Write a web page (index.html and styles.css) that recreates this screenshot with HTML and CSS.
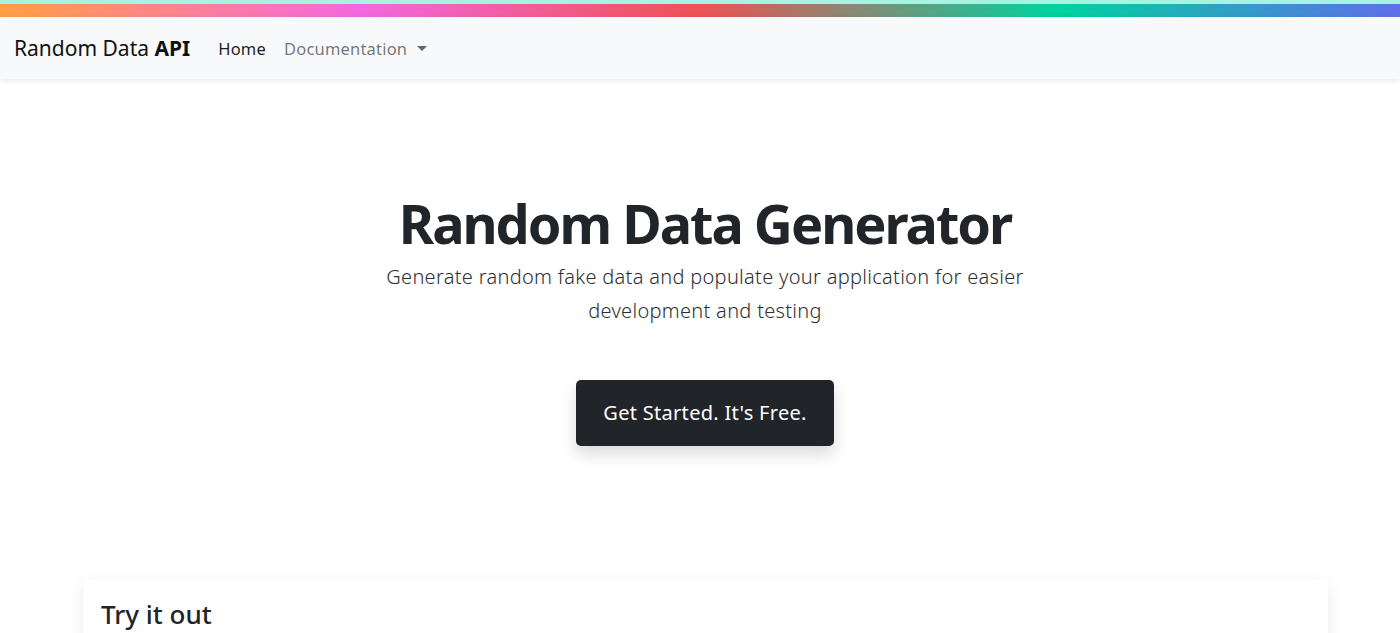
FILE: index.html
```html
<!DOCTYPE html>
<html lang="en">
<head>
<meta charset="utf-8">
<title>Random Data API</title>
<link rel="stylesheet" href="styles.css">
</head>
<body>
<div class="topstrip"></div>
<div class="rainbow"></div>
<nav class="navbar">
  <a class="brand" href="#">Random Data <b>API</b></a>
  <ul class="nav">
    <li><a class="nav-link active" href="#">Home</a></li>
    <li><a class="nav-link" href="#">Documentation <span class="caret"></span></a></li>
  </ul>
</nav>
<main>
  <section class="hero">
    <h1 class="title">Random Data Generator</h1>
    <p class="lead">Generate random fake data and populate your application for easier development and testing</p>
    <a class="btn" href="#">Get Started. It's Free.</a>
  </section>
  <section class="card">
    <h3 class="card-title">Try it out</h3>
  </section>
</main>
</body>
</html>
```
FILE: styles.css
```css
* { box-sizing: border-box; }
html, body { margin: 0; padding: 0; }
body {
  font-family: "Noto Sans", "Open Sans", sans-serif;
  color: #212529;
  background: #fff;
  overflow: hidden;
  height: 633px;
}
.topstrip { height: 4px; background: #a6f3e1; }
.rainbow {
  height: 13px;
  background: linear-gradient(90deg, #ff9f43 0%, #f368e0 25.5%, #ee5253 50%, #00d2a0 75.5%, #5f6ee8 100%);
}
.navbar {
  height: 62px;
  background: #f8f9fa;
  display: flex;
  align-items: center;
  padding: 0 14px;
  box-shadow: 0 2px 6px rgba(0,0,0,.08);
  position: relative;
  z-index: 2;
}
.brand {
  font-size: 21px;
  color: #111;
  text-decoration: none;
  margin-right: 24px;
  letter-spacing: 0;
}
.brand b { font-weight: 700; }
.nav { list-style: none; margin: 0; padding: 0; display: flex; }
.nav-link {
  display: flex;
  align-items: center;
  font-size: 16.5px;
  color: rgba(0,0,0,.55);
  text-decoration: none;
  padding: 8px 9px;
  letter-spacing: 0.2px;
}
.nav-link.active { color: rgba(0,0,0,.9); }
.nav li:first-child .nav-link { padding-left: 4px; }
.caret {
  display: inline-block;
  width: 0; height: 0;
  margin-left: 10px;
  border-left: 5px solid transparent;
  border-right: 5px solid transparent;
  border-top: 5px solid #666;
}
.hero {
  display: flex;
  flex-direction: column;
  align-items: center;
  padding: 112px 0 0 10px;
}
.title {
  margin: 0;
  font-size: 54px;
  font-weight: 700;
  line-height: 1.2;
  letter-spacing: -2px;
}
.lead {
  margin: 4px 0 0;
  width: 660px;
  text-align: center;
  font-size: 20px;
  font-weight: 300;
  line-height: 34px;
  letter-spacing: 0.3px;
  color: #2b2f33;
}
.btn {
  margin-top: 52px;
  display: inline-block;
  background: #212529;
  color: #fff;
  text-decoration: none;
  font-size: 20px;
  line-height: 30px;
  padding: 18px 27px;
  letter-spacing: 0.3px;
  border-radius: 5px;
  box-shadow: 0 8px 16px rgba(0,0,0,.15);
}
.card {
  margin: 133px 72px 0 83px;
  background: #fff;
  box-shadow: 0 6px 16px rgba(0,0,0,.08);
  padding: 20px 18px 40px;
}
.card-title {
  margin: 0;
  font-size: 26px;
  font-weight: 500;
  line-height: 1.2;
}
```
